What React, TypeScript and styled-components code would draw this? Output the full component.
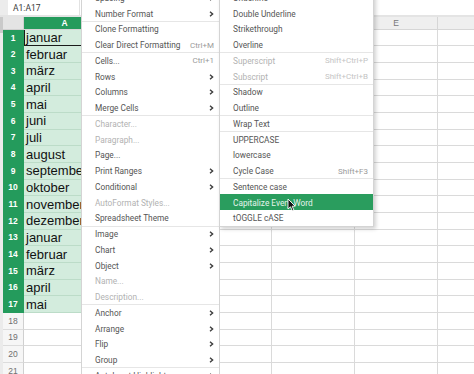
import React from "react";
import styled, { createGlobalStyle } from "styled-components";

const GlobalStyle = createGlobalStyle`
  html, body {
    margin: 0;
    padding: 0;
    background: #ffffff;
  }
  * {
    box-sizing: border-box;
  }
`;

const ROW_H = 16.67;
const ITEM_H = 15.75;

const Screen = styled.div`
  position: relative;
  width: 474px;
  height: 374px;
  overflow: hidden;
  background: #ffffff;
  font-family: Roboto, "Liberation Sans", sans-serif;
`;

const TopBar = styled.div`
  display: flex;
  height: 17px;
  border-bottom: 2px solid #e4e4e4;
`;

const TopGutter = styled.div`
  width: 8px;
  background: #ececec;
`;

const NameBox = styled.div`
  width: 72px;
  display: flex;
  align-items: center;
  padding-left: 5px;
  font-size: 8.5px;
  color: #3a3a3a;
  border-right: 1px solid #e2e2e2;
`;

const FormulaInput = styled.div`
  flex: 1;
  background: #ffffff;
`;

const Body = styled.div`
  display: flex;
`;

const SideGutter = styled.div`
  width: 6px;
  height: 357px;
  background: #ebebeb;
  display: flex;
  flex-direction: column;
`;

const GutterThumb = styled.div`
  width: 3px;
  height: 16px;
  background: #c9c9c9;
`;

const Sheet = styled.div`
  display: grid;
  grid-template-columns: 21px 82px 83px 83px 83px 83px 60px;
  grid-template-rows: 12.7px;
  grid-auto-rows: ${ROW_H}px;
`;

const ColHead = styled.div<{ $sel?: boolean }>`
  display: flex;
  align-items: center;
  justify-content: center;
  font-family: "Liberation Sans", Arial, sans-serif;
  font-size: 8.5px;
  font-weight: ${(p) => (p.$sel ? 700 : 400)};
  color: ${(p) => (p.$sel ? "#ffffff" : "#777777")};
  background: ${(p) => (p.$sel ? "#249b5c" : "#efefef")};
  border-right: 1px solid ${(p) => (p.$sel ? "#249b5c" : "#d6d6d6")};
  border-bottom: 1px solid #d6d6d6;
`;

const Corner = styled.div`
  background: #e4e4e4;
  border-right: 1px solid #d0d0d0;
  border-bottom: 1px solid #d0d0d0;
`;

const RowHead = styled.div<{ $sel?: boolean }>`
  display: flex;
  align-items: center;
  justify-content: center;
  font-family: "Liberation Sans", Arial, sans-serif;
  font-size: 8.5px;
  font-weight: ${(p) => (p.$sel ? 700 : 400)};
  color: ${(p) => (p.$sel ? "#ffffff" : "#707070")};
  background: ${(p) => (p.$sel ? "#249b5c" : "#f6f6f6")};
  border-bottom: 1px solid ${(p) => (p.$sel ? "#249b5c" : "#dcdcdc")};
  border-right: 1px solid ${(p) => (p.$sel ? "#249b5c" : "#d0d0d0")};
`;

const Cell = styled.div<{ $sel?: boolean; $active?: boolean }>`
  display: flex;
  align-items: center;
  padding-left: 2px;
  white-space: nowrap;
  overflow: visible;
  font-family: "Liberation Sans", Arial, sans-serif;
  font-size: 13px;
  color: #111111;
  background: ${(p) => (p.$sel ? "#d3ecdd" : "#ffffff")};
  border-right: 1px solid ${(p) => (p.$sel ? "#bfdfcb" : "#dadada")};
  border-bottom: 1px solid ${(p) => (p.$sel ? "#bcdcc8" : "#dadada")};
  ${(p) =>
    p.$active &&
    `
    border-left: 1px solid #1a1a1a;
    border-bottom: 1px solid #1a1a1a;
    padding-left: 1px;
  `}
`;

const Menu = styled.div<{ $left: number; $width: number; $shadow?: boolean }>`
  position: absolute;
  top: -10.6px;
  left: ${(p) => p.$left}px;
  width: ${(p) => p.$width}px;
  background: #ffffff;
  border: 1px solid #d4d4d4;
  border-top: none;
  box-shadow: ${(p) =>
    p.$shadow ? "2px 2px 4px rgba(0,0,0,0.18)" : "none"};
  display: flex;
  flex-direction: column;
`;

const Item = styled.div<{
  $disabled?: boolean;
  $sep?: boolean;
  $hover?: boolean;
}>`
  height: ${ITEM_H}px;
  flex-shrink: 0;
  display: flex;
  align-items: center;
  padding: 0 5px 0 13px;
  font-size: 8.3px;
  white-space: nowrap;
  color: ${(p) =>
    p.$hover ? "#e6f4ec" : p.$disabled ? "#b2b2b2" : "#555555"};
  background: ${(p) => (p.$hover ? "#2a9d5e" : "transparent")};
  border-top: 1px solid ${(p) => (p.$sep ? "#e6e6e6" : "transparent")};
`;

const Label = styled.span`
  flex: 1;
`;

const Shortcut = styled.span<{ $disabled?: boolean }>`
  color: ${(p) => (p.$disabled ? "#c4c4c4" : "#9a9a9a")};
  font-size: 8px;
`;

const Chevron = () => (
  <svg width="5" height="6" viewBox="0 0 5 6">
    <polyline
      points="1,0.8 3.6,3 1,5.2"
      fill="none"
      stroke="#3d3d3d"
      strokeWidth="1.4"
    />
  </svg>
);

const Cursor = styled.svg`
  position: absolute;
  left: 287px;
  top: 198px;
`;

type MenuEntry = {
  label: string;
  sub?: boolean;
  key?: string;
  disabled?: boolean;
  sep?: boolean;
  hover?: boolean;
};

const formatMenu: MenuEntry[] = [
  { label: "Spacing", sub: true },
  { label: "Number Format", sub: true },
  { label: "Clone Formatting", sep: true },
  { label: "Clear Direct Formatting", key: "Ctrl+M" },
  { label: "Cells...", key: "Ctrl+1", sep: true },
  { label: "Rows", sub: true },
  { label: "Columns", sub: true },
  { label: "Merge Cells", sub: true },
  { label: "Character...", disabled: true, sep: true },
  { label: "Paragraph...", disabled: true },
  { label: "Page..." },
  { label: "Print Ranges", sub: true },
  { label: "Conditional", sub: true },
  { label: "AutoFormat Styles...", disabled: true },
  { label: "Spreadsheet Theme" },
  { label: "Image", sub: true, sep: true },
  { label: "Chart", sub: true },
  { label: "Object", sub: true },
  { label: "Name...", disabled: true },
  { label: "Description...", disabled: true },
  { label: "Anchor", sub: true, sep: true },
  { label: "Arrange", sub: true },
  { label: "Flip", sub: true },
  { label: "Group", sub: true },
  { label: "AutoInput Highlight", sep: true, sub: true },
];

const textMenu: MenuEntry[] = [
  { label: "Underline" },
  { label: "Double Underline" },
  { label: "Strikethrough" },
  { label: "Overline" },
  { label: "Superscript", key: "Shift+Ctrl+P", disabled: true, sep: true },
  { label: "Subscript", key: "Shift+Ctrl+B", disabled: true },
  { label: "Shadow", sep: true },
  { label: "Outline" },
  { label: "Wrap Text", sep: true },
  { label: "UPPERCASE", sep: true },
  { label: "lowercase" },
  { label: "Cycle Case", key: "Shift+F3" },
  { label: "Sentence case", sep: true },
  { label: "Capitalize Every Word", hover: true },
  { label: "tOGGLE cASE" },
];

const months = [
  "januar",
  "februar",
  "märz",
  "april",
  "mai",
  "juni",
  "juli",
  "august",
  "september",
  "oktober",
  "november",
  "dezember",
  "januar",
  "februar",
  "märz",
  "april",
  "mai",
];

const columns = ["A", "B", "C", "D", "E", "F"];

const MenuList = ({ entries }: { entries: MenuEntry[] }) => (
  <>
    {entries.map((e, i) => (
      <Item key={i} $disabled={e.disabled} $sep={e.sep} $hover={e.hover}>
        <Label>{e.label}</Label>
        {e.key && <Shortcut $disabled={e.disabled}>{e.key}</Shortcut>}
        {e.sub && <Chevron />}
      </Item>
    ))}
  </>
);

export default function App() {
  const rows = Array.from({ length: 21 }, (_, i) => i + 1);

  return (
    <Screen>
      <GlobalStyle />
      <TopBar>
        <TopGutter />
        <NameBox>A1:A17</NameBox>
        <FormulaInput />
      </TopBar>
      <Body>
        <SideGutter>
          <GutterThumb />
        </SideGutter>
        <Sheet>
          <Corner />
          {columns.map((c) => (
            <ColHead key={c} $sel={c === "A"}>
              {c === "E" || c === "A" ? c : ""}
            </ColHead>
          ))}
          {rows.map((r) => {
            const sel = r <= 17;
            return (
              <React.Fragment key={r}>
                <RowHead $sel={sel}>{r}</RowHead>
                {columns.map((c) => (
                  <Cell
                    key={c}
                    $sel={sel && c === "A"}
                    $active={r === 1 && c === "A"}
                  >
                    {c === "A" && sel ? months[r - 1] : ""}
                  </Cell>
                ))}
              </React.Fragment>
            );
          })}
        </Sheet>
      </Body>

      <Menu $left={81} $width={139}>
        <MenuList entries={formatMenu} />
      </Menu>
      <Menu $left={219} $width={155} $shadow>
        <MenuList entries={textMenu} />
      </Menu>

      <Cursor width="9" height="14" viewBox="0 0 9 14">
        <path
          d="M1 1 L1 11 L3.5 8.8 L5.3 12.8 L6.9 12.1 L5.2 8.2 L8.2 8.2 Z"
          fill="#111"
          stroke="#ffffff"
          strokeWidth="0.9"
          strokeLinejoin="round"
        />
      </Cursor>
    </Screen>
  );
}
